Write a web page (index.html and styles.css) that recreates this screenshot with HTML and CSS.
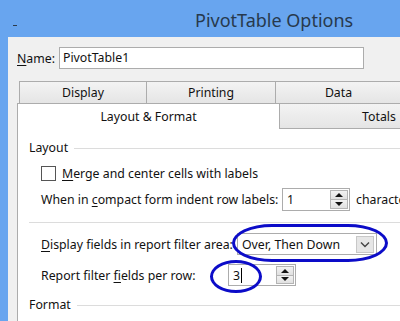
FILE: index.html
```html
<!DOCTYPE html>
<html>
<head>
<meta charset="utf-8">
<link rel="stylesheet" href="styles.css">
</head>
<body>
<div class="titlebar">
  <span class="title-dash"></span>
  <h1 class="title">PivotTable Options</h1>
</div>
<div class="window">
  <div class="name-row">
    <span class="name-label"><u>N</u>ame:</span>
    <div class="textbox">PivotTable1</div>
  </div>
  <div class="tabs">
    <div class="tab-row back">
      <div class="tab t-display">Display</div>
      <div class="tab t-printing">Printing</div>
      <div class="tab t-data">Data</div>
    </div>
    <div class="tab-row front">
      <div class="tab active">Layout &amp; Format</div>
      <div class="tab t-totals">Totals</div>
    </div>
  </div>
  <div class="panel">
    <div class="group-head"><span>Layout</span><span class="rule"></span></div>
    <div class="row merge-row">
      <span class="checkbox"></span>
      <span><u>M</u>erge and center cells with labels</span>
    </div>
    <div class="row indent-row">
      <span class="label indent-label">When in <u>c</u>ompact form indent row labels:</span>
      <div class="spinbox indent-box">
        <span class="spin-value">1</span>
        <div class="spin">
          <span class="spin-btn up"><span class="tri-up"></span></span>
          <span class="spin-btn down"><span class="tri-down"></span></span>
        </div>
      </div>
      <span class="after">characters</span>
    </div>
    <div class="separator"></div>
    <div class="row display-row">
      <span class="label display-label"><u>D</u>isplay fields in report filter area:</span>
      <div class="annot-wrap">
        <div class="dropdown">
          <span class="dd-value">Over, Then Down</span>
          <span class="dd-btn">
            <svg width="10" height="7" viewBox="0 0 10 7"><path d="M1 1.5 L5 5.5 L9 1.5" fill="none" stroke="#444" stroke-width="1.4"/></svg>
          </span>
        </div>
        <span class="ellipse ellipse-dd"></span>
      </div>
    </div>
    <div class="row report-row">
      <span class="label report-label">Report filter <u>f</u>ields per row:</span>
      <div class="annot-wrap">
        <div class="spinbox report-box">
          <span class="spin-value">3<span class="caret"></span></span>
          <div class="spin">
            <span class="spin-btn up"><span class="tri-up"></span></span>
            <span class="spin-btn down"><span class="tri-down"></span></span>
          </div>
        </div>
        <span class="ellipse ellipse-num"></span>
      </div>
    </div>
    <div class="group-head format-head"><span>Format</span><span class="rule"></span></div>
  </div>
</div>
</body>
</html>
```
FILE: styles.css
```css
* { box-sizing: border-box; margin: 0; padding: 0; }
html, body { width: 400px; height: 321px; overflow: hidden; }
body {
  background: #68a5ef;
  font-family: "Noto Sans", "Open Sans", sans-serif;
  font-size: 12.3px;
  color: #111;
  white-space: nowrap;
}
u { text-decoration: underline; text-underline-offset: 2px; }

.titlebar { height: 37px; display: flex; align-items: center; }
.title-dash { width: 4px; height: 1px; background: #2b3a4c; margin-left: 13px; margin-top: 13px; flex: none; }
.title {
  font-weight: normal;
  font-size: 18px;
  line-height: 26px;
  color: #27394d;
  margin-left: 178px;
  margin-top: 2px;
}

.window {
  margin-left: 8px;
  background: #f0f0f0;
  height: 284px;
  padding-top: 10px;
}
.name-row { display: flex; align-items: center; margin-left: 9px; height: 22px; }
.name-label { width: 42px; flex: none; line-height: 17px; }
.textbox {
  width: 305px; height: 22px; flex: none;
  border: 1px solid #acacac; background: #fff;
  padding-left: 3px; line-height: 20px;
}

.tabs { margin-top: 12px; }
.tab-row { display: flex; align-items: flex-start; }
.tab {
  display: flex; align-items: center; justify-content: center; flex: none;
  border: 1px solid #acacac; border-bottom: none;
  background: linear-gradient(#f3f3f3, #e5e5e5);
  line-height: 17px;
}
.back { margin-left: 11px; height: 22px; }
.back .tab { height: 22px; }
.t-display { width: 128px; }
.t-printing { width: 130px; margin-left: -1px; }
.t-data { width: 127px; margin-left: -1px; }
.front { margin-left: 9px; height: 25px; }
.tab.active {
  width: 263px; height: 26px; background: #fff;
  position: relative; z-index: 1; padding-bottom: 1px;
}
.t-totals { width: 200px; height: 25px; margin-left: -1px; }

.panel {
  margin-left: 9px;
  height: 200px;
  background: #fff;
  border-left: 1px solid #acacac;
  border-top: 1px solid #acacac;
}
.group-head { display: flex; align-items: center; height: 16px; margin-top: 11px; padding-left: 11px; line-height: 16px; }
.rule { flex: 1; height: 1px; background: #dcdcdc; margin-left: 6px; }
.format-head { margin-top: 11px; }

.row { display: flex; align-items: center; padding-left: 23px; line-height: 17px; }
.label { flex: none; }
.merge-row { margin-top: 9px; height: 17px; }
.checkbox { width: 15px; height: 15px; border: 1px solid #555; background: #fff; margin-right: 6px; flex: none; }

.indent-row { margin-top: 6px; height: 23px; }
.indent-label { width: 241px; }
.spinbox {
  display: flex; align-items: stretch; flex: none;
  border: 1px solid #acacac; background: #fff;
}
.indent-box { width: 68px; height: 23px; }
.spin-value { flex: 1; padding-left: 4px; display: flex; align-items: center; }
.spin { width: 19px; display: flex; flex-direction: column; padding: 1px 1px 1px 0; }
.spin-btn {
  flex: 1; display: flex; align-items: center; justify-content: center;
  background: linear-gradient(#f2f2f2, #e0e0e0);
  border: 1px solid #b4b4b4;
}
.spin-btn.down { border-top: none; }
.tri-up { width: 0; height: 0; border-left: 4px solid transparent; border-right: 4px solid transparent; border-bottom: 4px solid #111; }
.tri-down { width: 0; height: 0; border-left: 4px solid transparent; border-right: 4px solid transparent; border-top: 4px solid #111; }
.after { margin-left: 6px; }

.separator { height: 1px; background: #dcdcdc; margin: 11px 0 0 11px; }

.display-row { margin-top: 10px; height: 22px; }
.display-label { width: 196px; }
.annot-wrap { position: relative; flex: none; }
.dropdown {
  width: 140px; height: 22px; display: flex; align-items: center;
  border: 1px solid #acacac; background: #fff; padding: 2px;
}
.dd-value { flex: 1; padding-left: 2px; }
.dd-btn {
  width: 18px; height: 17px; display: flex; align-items: center; justify-content: center;
  background: #e6e6e6; border: 1px solid #c8c8c8;
}

.report-row { margin-top: 9px; height: 22px; }
.report-label { width: 187px; }
.report-box { width: 68px; height: 22px; }
.caret { display: inline-block; width: 1px; height: 15px; background: #000; margin-left: 1px; vertical-align: middle; }

.ellipse {
  position: absolute;
  border: 3px solid #0c0cc8;
  border-radius: 50%;
  pointer-events: none;
}
.ellipse-dd { left: -5px; top: -9px; width: 156px; height: 38px; border-radius: 40px / 19px; }
.ellipse-num { left: -18px; top: -4px; width: 52px; height: 33px; }
```
